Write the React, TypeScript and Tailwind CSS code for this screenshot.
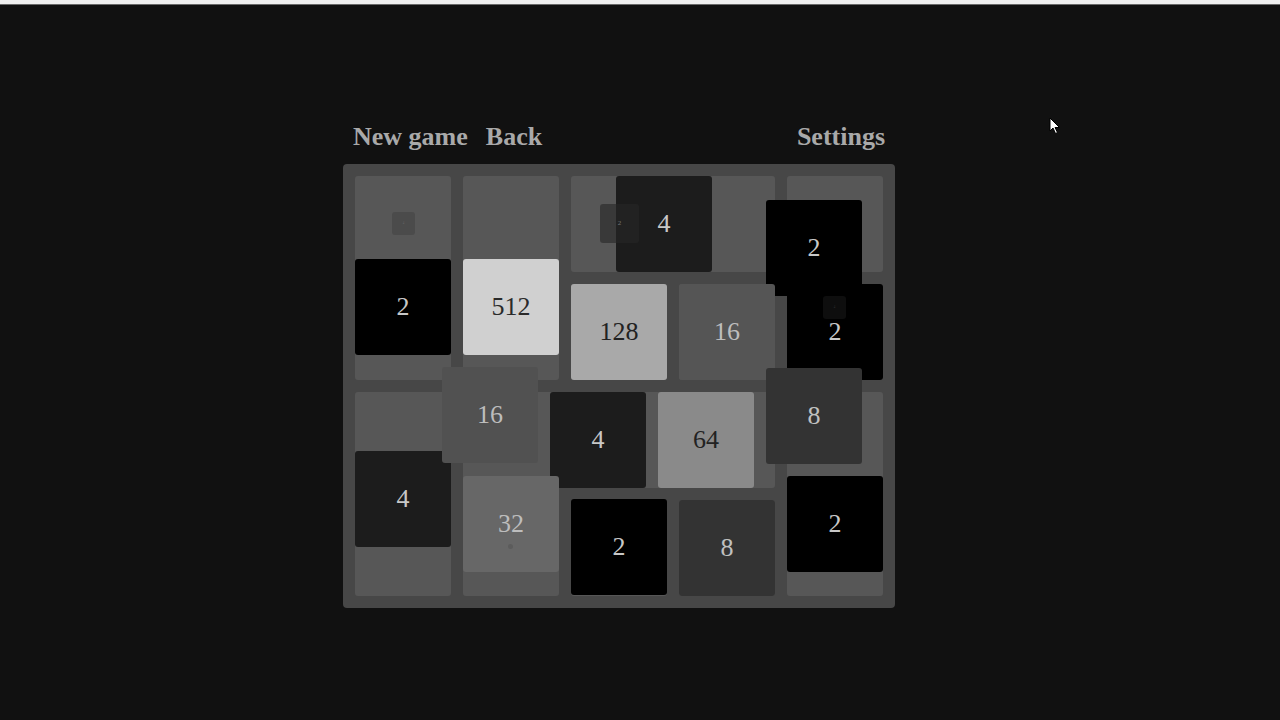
import React from "react";

type Tile = {
  value: string;
  pos: string; // absolute offsets inside the board
  size: string;
  color: string;
  text: string;
};

// tiles caught mid-slide, so some sit between cells
const tiles: Tile[] = [
  { value: "4", pos: "left-[49px] top-[48px]", size: "w-[23px] h-[23px] text-[3px]", color: "bg-[#4b4b4b]", text: "text-[#666]" },
  { value: "4", pos: "left-[273px] top-[12px]", size: "w-[96px] h-[96px] text-[26px]", color: "bg-[#1c1c1c]", text: "text-[#c8c8c8]" },
  { value: "2", pos: "left-[257px] top-[40px]", size: "w-[39px] h-[39px] text-[7px]", color: "bg-[rgba(39,39,39,0.61)]", text: "text-[#777]" },
  { value: "2", pos: "left-[423px] top-[36px]", size: "w-[96px] h-[96px] text-[26px]", color: "bg-black", text: "text-[#c8c8c8]" },
  { value: "2", pos: "left-[12px] top-[95px]", size: "w-[96px] h-[96px] text-[26px]", color: "bg-black", text: "text-[#c8c8c8]" },
  { value: "512", pos: "left-[120px] top-[95px]", size: "w-[96px] h-[96px] text-[26px]", color: "bg-[#d0d0d0]", text: "text-[#2a2a2a]" },
  { value: "128", pos: "left-[228px] top-[120px]", size: "w-[96px] h-[96px] text-[26px]", color: "bg-[#a9a9a9]", text: "text-[#222]" },
  { value: "16", pos: "left-[336px] top-[120px]", size: "w-[96px] h-[96px] text-[26px]", color: "bg-[#555555]", text: "text-[#bdbdbd]" },
  { value: "2", pos: "left-[444px] top-[120px]", size: "w-[96px] h-[96px] text-[26px]", color: "bg-black", text: "text-[#c8c8c8]" },
  { value: "4", pos: "left-[480px] top-[132px]", size: "w-[23px] h-[23px] text-[3px]", color: "bg-[#0e0e0e]", text: "text-[#333]" },
  { value: "8", pos: "left-[423px] top-[204px]", size: "w-[96px] h-[96px] text-[26px]", color: "bg-[#333333]", text: "text-[#c0c0c0]" },
  { value: "4", pos: "left-[12px] top-[287px]", size: "w-[96px] h-[96px] text-[26px]", color: "bg-[#1c1c1c]", text: "text-[#c8c8c8]" },
  { value: "16", pos: "left-[99px] top-[203px]", size: "w-[96px] h-[96px] text-[26px]", color: "bg-[#515151]", text: "text-[#bdbdbd]" },
  { value: "4", pos: "left-[207px] top-[228px]", size: "w-[96px] h-[96px] text-[26px]", color: "bg-[#1c1c1c]", text: "text-[#c8c8c8]" },
  { value: "64", pos: "left-[315px] top-[228px]", size: "w-[96px] h-[96px] text-[26px]", color: "bg-[#8a8a8a]", text: "text-[#222]" },
  { value: "32", pos: "left-[120px] top-[312px]", size: "w-[96px] h-[96px] text-[26px]", color: "bg-[#676767]", text: "text-[#bdbdbd]" },
  { value: "", pos: "left-[165px] top-[380px]", size: "w-[5px] h-[5px] text-[1px]", color: "bg-[#5c5c5c]", text: "text-[#5c5c5c]" },
  { value: "2", pos: "left-[228px] top-[335px]", size: "w-[96px] h-[96px] text-[26px]", color: "bg-black", text: "text-[#c8c8c8]" },
  { value: "8", pos: "left-[336px] top-[336px]", size: "w-[96px] h-[96px] text-[26px]", color: "bg-[#333333]", text: "text-[#c0c0c0]" },
  { value: "2", pos: "left-[444px] top-[312px]", size: "w-[96px] h-[96px] text-[26px]", color: "bg-black", text: "text-[#c8c8c8]" },
];

function Cursor() {
  return (
    <svg className="absolute left-[1049px] top-[117px]" width="12" height="18" viewBox="0 0 12 18">
      <path d="M1 1 L1 14 L4 11 L6.5 16.5 L8.5 15.5 L6 10.5 L10.5 10.5 Z" fill="#fff" stroke="#000" strokeWidth="1" strokeLinejoin="round" />
    </svg>
  );
}

export default function App() {
  return (
    <div
      className="relative min-h-screen bg-[#111111]"
      style={{ fontFamily: '"Liberation Serif", "DejaVu Serif", serif' }}
    >
      <div className="h-[5px] border-b border-[#6a6a6a] bg-[#f0f0f0]" />

      <div className="pl-[343px] pt-[117px]">
        <div className="w-[552px]">
          <div className="flex items-center justify-between px-[10px] text-[26px] font-bold leading-[30px] text-[#a9a9a9]">
            <div className="flex gap-[18px]">
              <span>New game</span>
              <span>Back</span>
            </div>
            <span>Settings</span>
          </div>

          <div className="relative mt-[12px] h-[444px] rounded-[4px] bg-[#474747] p-[12px]">
            <div className="grid grid-cols-5 gap-[12px]">
              {Array.from({ length: 20 }).map((_, i) => (
                <div key={i} className="h-[96px] w-[96px] rounded-[3px] bg-[#575757]" />
              ))}
            </div>

            {tiles.map((t, i) => (
              <div
                key={i}
                className={`absolute flex items-center justify-center rounded-[3px] font-normal leading-none ${t.pos} ${t.size} ${t.color} ${t.text}`}
              >
                {t.value}
              </div>
            ))}
          </div>
        </div>
      </div>

      <Cursor />
    </div>
  );
}
